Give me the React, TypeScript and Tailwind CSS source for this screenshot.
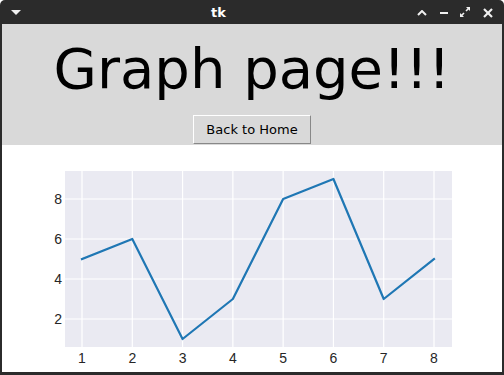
import React from "react";

const data = [5, 6, 1, 3, 8, 9, 3, 5];
const px = (i: number) => 80 + i * (352 / 7);
const py = (v: number) => 34 + (9 - v) * 20;

function Chart() {
  const pts = data.map((v, i) => `${px(i)},${py(v)}`).join(" ");
  return (
    <svg width="500" height="227" viewBox="0 0 500 227" className="block">
      <rect x="63" y="26" width="387" height="176" fill="#EAEAF2" />
      {data.map((_, i) => (
        <line key={"v" + i} x1={px(i)} x2={px(i)} y1="26" y2="202" stroke="#fff" strokeWidth="1.2" />
      ))}
      {[2, 4, 6, 8].map((v) => (
        <line key={"h" + v} x1="63" x2="450" y1={py(v)} y2={py(v)} stroke="#fff" strokeWidth="1.2" />
      ))}
      <polyline points={pts} fill="none" stroke="#1f77b4" strokeWidth="2.2" strokeLinejoin="round" strokeLinecap="square" />
      {[2, 4, 6, 8].map((v) => (
        <text key={"yl" + v} x="60" y={py(v) + 5} textAnchor="end" fontSize="14" fill="#262626" fontFamily="'Liberation Sans', Arial, sans-serif">
          {v}
        </text>
      ))}
      {data.map((_, i) => (
        <text key={"xl" + i} x={px(i)} y="218" textAnchor="middle" fontSize="14" fill="#262626" fontFamily="'Liberation Sans', Arial, sans-serif">
          {i + 1}
        </text>
      ))}
    </svg>
  );
}

export default function App() {
  return (
    <div className="w-[504px] h-[375px] bg-[#2b2b2b] flex flex-col rounded-t-[5px] overflow-hidden" style={{ fontFamily: "'DejaVu Sans', sans-serif" }}>
      <div className="h-[24px] flex items-center relative text-white">
        <svg width="10" height="6" viewBox="0 0 10 6" className="absolute left-[11px] top-[10px]">
          <polygon points="0,0 10,0 5,5" fill="#f0f0f0" />
        </svg>
        <div className="ml-[211px] text-[13px] font-bold leading-none pt-[1px]">tk</div>
        <svg width="10" height="6" viewBox="0 0 10 6" className="absolute left-[417px] top-[10px]">
          <polyline points="1,5 5,1 9,5" fill="none" stroke="#f0f0f0" strokeWidth="2" />
        </svg>
        <svg width="10" height="4" viewBox="0 0 10 4" className="absolute left-[439px] top-[11px]">
          <rect x="1" y="1" width="8" height="2" fill="#f0f0f0" />
        </svg>
        <svg width="12" height="12" viewBox="0 0 12 12" className="absolute left-[459px] top-[6px]">
          <polygon points="7,1 11,1 11,5" fill="#f0f0f0" />
          <line x1="10" y1="2" x2="7" y2="5" stroke="#f0f0f0" strokeWidth="1.6" />
          <polygon points="1,7 1,11 5,11" fill="#f0f0f0" />
          <line x1="2" y1="10" x2="5" y2="7" stroke="#f0f0f0" strokeWidth="1.6" />
        </svg>
        <svg width="10" height="10" viewBox="0 0 10 10" className="absolute left-[483px] top-[8px]">
          <line x1="1" y1="1" x2="9" y2="9" stroke="#f0f0f0" strokeWidth="2.2" />
          <line x1="9" y1="1" x2="1" y2="9" stroke="#f0f0f0" strokeWidth="2.2" />
        </svg>
      </div>
      <div className="flex-1 flex flex-col px-[2px] pb-[3px]">
        <div className="h-[121px] bg-[#d9d9d9] flex flex-col items-center">
          <div className="text-[56px] leading-none text-black mt-[17px] h-[74px]">Graph page!!!</div>
          <button className="w-[118px] h-[29px] bg-[#d9d9d9] text-[13px] text-black border border-t-white border-l-white border-r-[#888] border-b-[#888] flex items-center justify-center">
            Back to Home
          </button>
        </div>
        <div className="h-[227px] bg-white">
          <Chart />
        </div>
      </div>
    </div>
  );
}
